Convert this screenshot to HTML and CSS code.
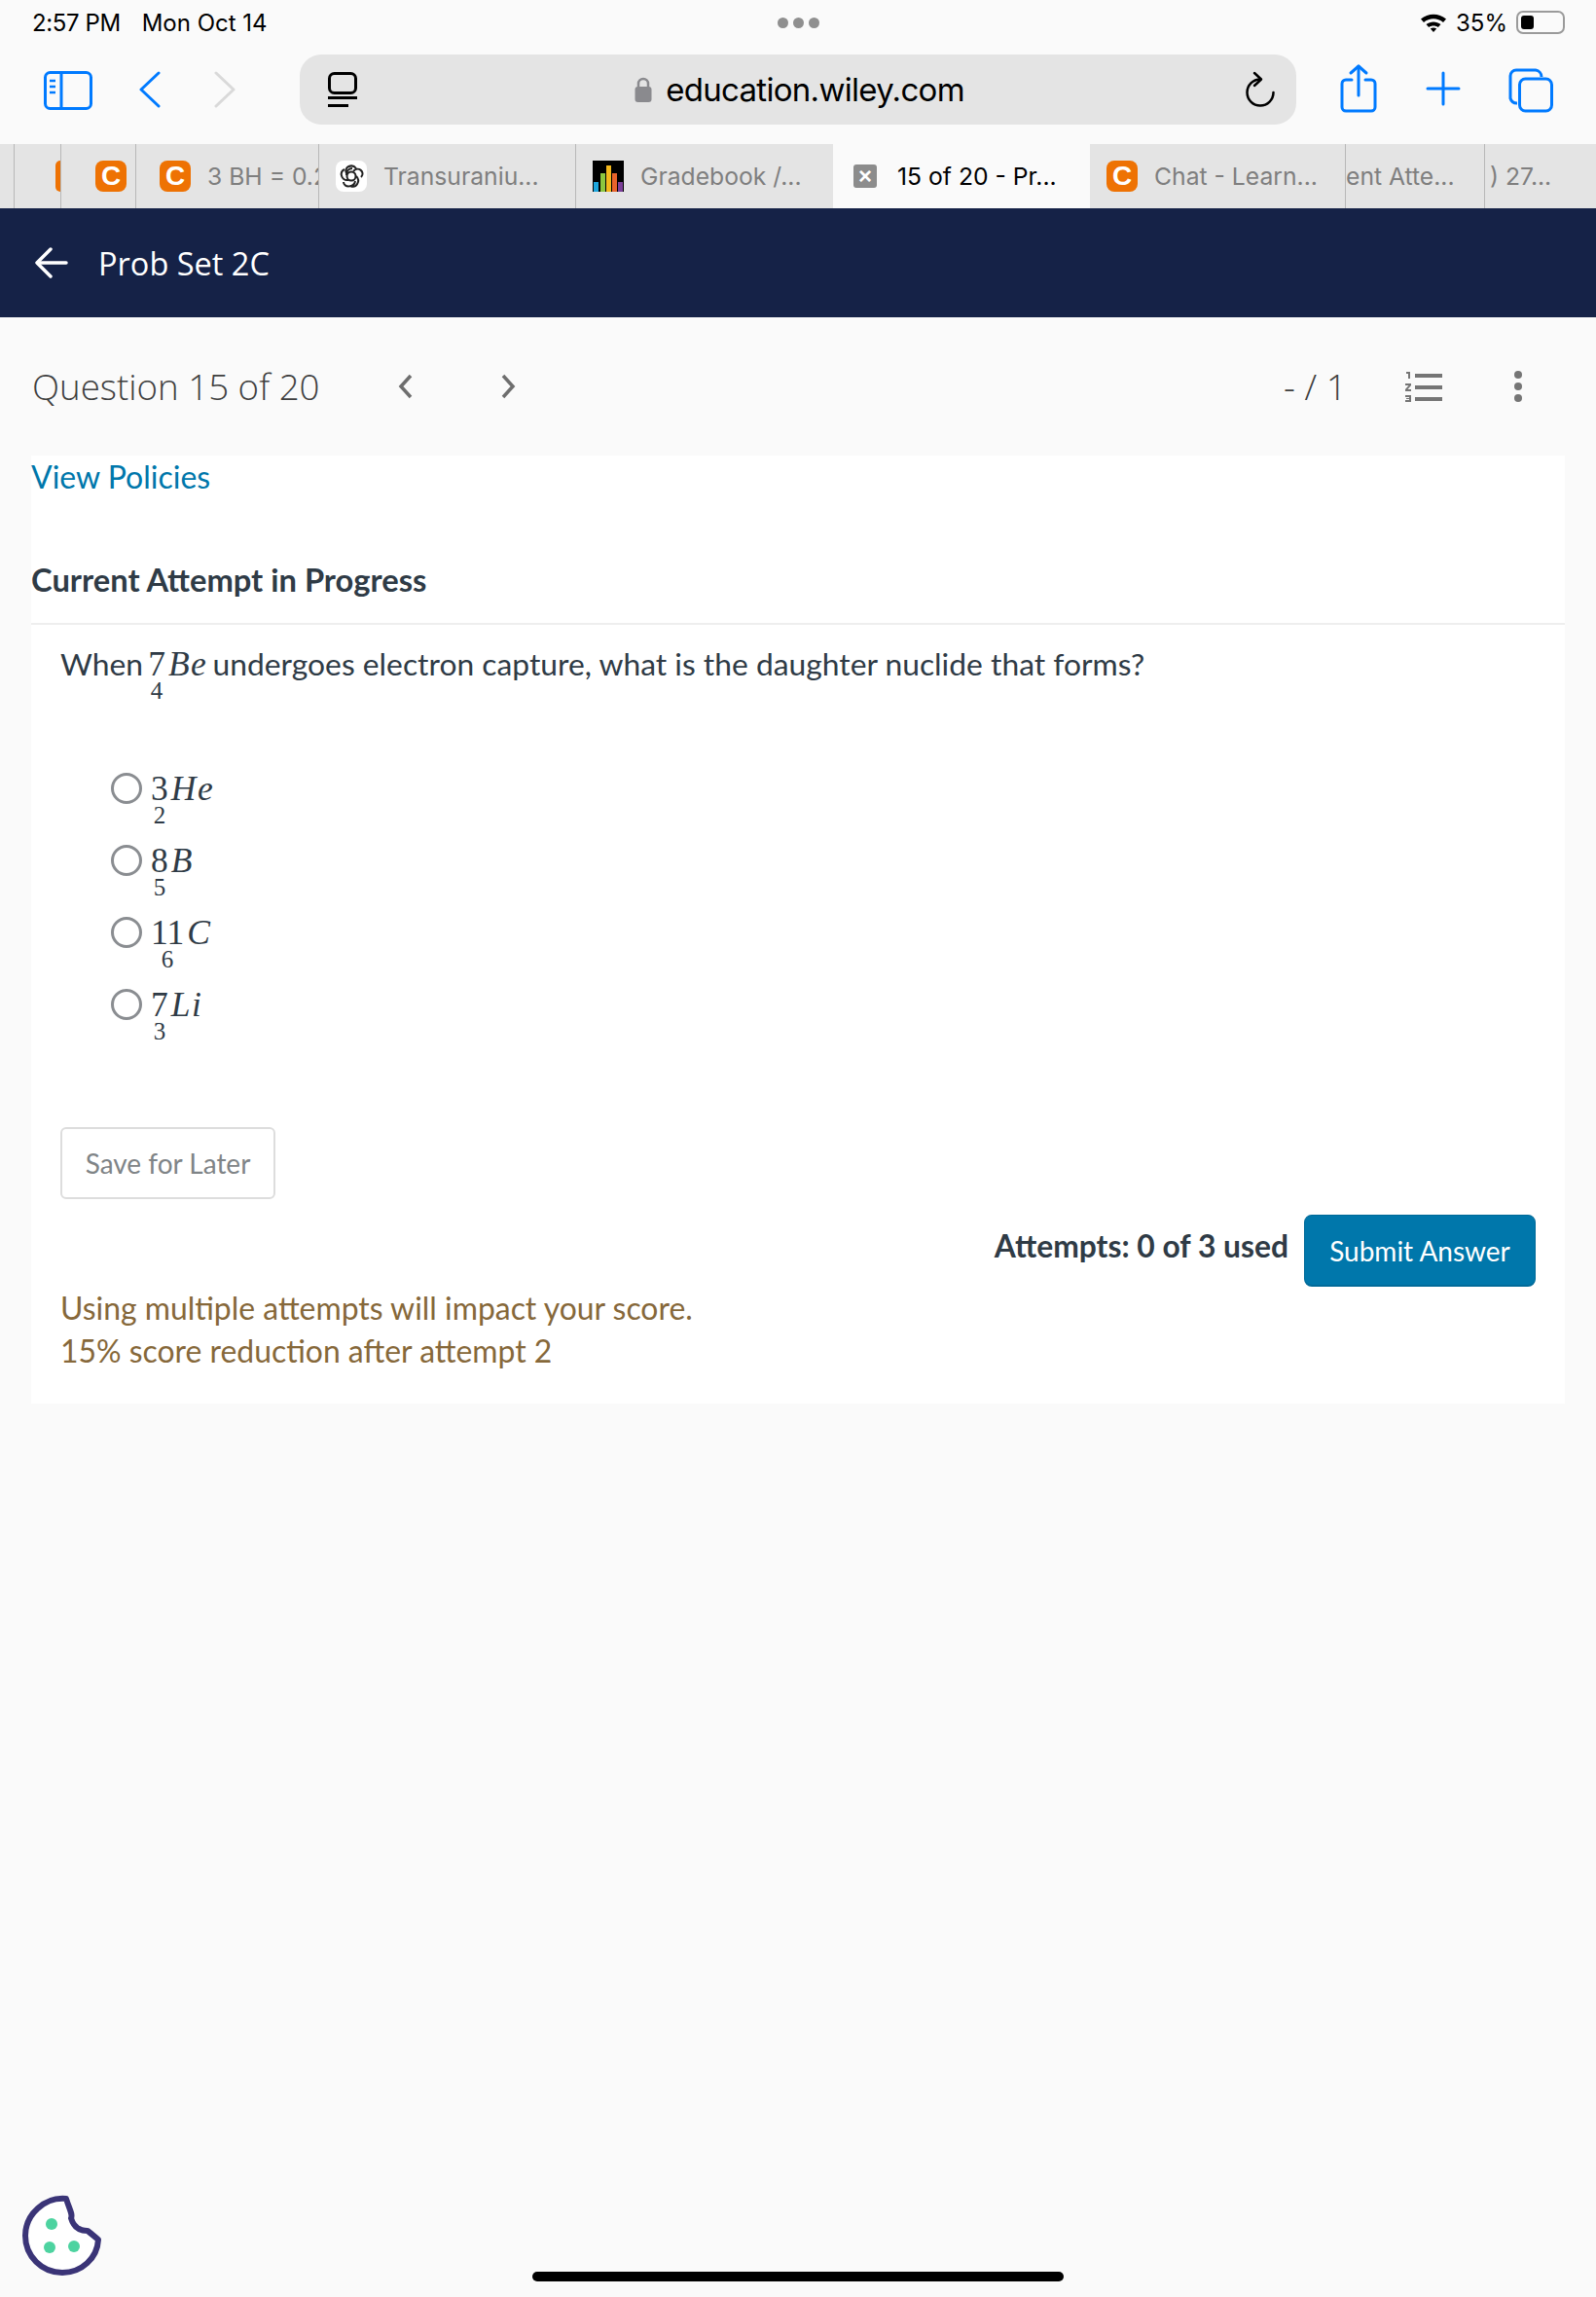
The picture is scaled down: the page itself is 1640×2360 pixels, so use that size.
FILE: index.html
```html
<!DOCTYPE html>
<html lang="en">
<head>
    <meta charset="UTF-8">
    <title>15 of 20 - Prob Set 2C</title>
    <link rel="stylesheet" href="styles.css">
</head>
<body>
    <div class="screen">
        <!-- status bar -->
        <div class="status">
            <div class="status-left"><span class="clock">2:57 PM</span><span>Mon Oct 14</span></div>
            <div class="status-dots"><i></i><i></i><i></i></div>
            <div class="status-right">
                <svg class="wifi" viewBox="0 0 28 22"><path d="M1 7.500C8.500 1 19.500 1 27 7.500L24 11C18 6 10 6 4 11Z M6.500 13C11 9.500 17 9.500 21.500 13L18.800 16C16 14 12 14 9.200 16Z M10.800 17.500C12.800 16 15.200 16 17.200 17.500L14 21Z" fill="#000"/></svg>
                <span>35%</span>
                <div class="battery"><div class="battery-fill"></div></div>
            </div>
        </div>

        <!-- safari toolbar -->
        <div class="toolbar">
            <svg class="ic-sidebar" viewBox="0 0 50 40" fill="none" stroke="#007aff" stroke-width="3"><rect x="1.500" y="1.500" width="47" height="37" rx="5"/><path d="M18 1.500V38.500"/><path d="M6 10H12M6 16H12M6 22H12" stroke-width="2.500"/></svg>
            <svg class="ic-back" viewBox="0 0 24 38" fill="none" stroke="#007aff" stroke-width="3" stroke-linecap="round" stroke-linejoin="round"><path d="M21 2L3 19L21 36"/></svg>
            <svg class="ic-forward" viewBox="0 0 24 38" fill="none" stroke="#d9d9d9" stroke-width="3" stroke-linecap="round" stroke-linejoin="round"><path d="M3 2L21 19L3 36"/></svg>
            <div class="address">
                <svg class="ic-reader" viewBox="0 0 32 36" fill="none" stroke="#000" stroke-width="3"><rect x="2.500" y="1.500" width="27" height="20" rx="5"/><path d="M1 26.500H31"/><path d="M1 34.500H22"/></svg>
                <div class="url">
                    <svg class="ic-lock" viewBox="0 0 18 28"><path d="M4 13V8a5 5 0 0 1 10 0v5" fill="none" stroke="#8a8a8e" stroke-width="2.500"/><rect x="0.500" y="11" width="17" height="16" rx="3" fill="#8a8a8e"/></svg>
                    <span>education.wiley.com</span>
                </div>
                <svg class="ic-reload" viewBox="0 0 32 38" fill="none" stroke="#000" stroke-width="2.500" stroke-linecap="round" stroke-linejoin="round"><path d="M16 8.500A13.500 13.500 0 1 0 29.500 22"/><path d="M10 2L17 8.500L10 15"/></svg>
            </div>
            <svg class="ic-share" viewBox="0 0 38 50" fill="none" stroke="#007aff" stroke-width="3" stroke-linecap="round" stroke-linejoin="round"><path d="M12 16H6a4 4 0 0 0-4 4V44a4 4 0 0 0 4 4H32a4 4 0 0 0 4-4V20a4 4 0 0 0-4-4H26"/><path d="M19 32V2"/><path d="M11 9L19 2L27 9"/></svg>
            <svg class="ic-plus" viewBox="0 0 36 36" stroke="#007aff" stroke-width="3" stroke-linecap="round"><path d="M18 2V34M2 18H34"/></svg>
            <svg class="ic-tabs" viewBox="0 0 46 46" fill="none" stroke="#007aff" stroke-width="3"><path d="M9 36A7 7 0 0 1 2 31V8A6 6 0 0 1 8 2H28A7 7 0 0 1 34 9"/><rect x="11.500" y="11" width="33" height="33" rx="6"/></svg>
        </div>

        <!-- tabs -->
        <div class="tabs">
            <div class="tab tab-a"></div>
            <div class="tab tab-b"><span class="fav fav-cut"></span></div>
            <div class="tab tab-c"><span class="fav fav-c">C</span></div>
            <div class="tab tab-d"><span class="fav">C</span><span class="tab-text">3 BH = 0.2</span></div>
            <div class="tab tab-e">
                <span class="fav fav-white"><svg viewBox="0 0 32 32" fill="none" stroke="#222" stroke-width="2"><circle cx="16" cy="16" r="4.500"/><path d="M11 13C8 6 17 3 21 8M18 11C23 5 31 12 26 17M21 16C26 21 21 29 15 26M20 21C19 28 8 28 8 22M13 20C6 21 3 12 9 9M11 15C11 10 14 8 17 8"/></svg></span>
                <span class="tab-text">Transuraniu...</span>
            </div>
            <div class="tab tab-f">
                <span class="fav fav-bars"><svg viewBox="0 0 32 32"><rect width="32" height="32" fill="#000"/><rect x="1" y="22" width="5" height="10" fill="#1ea5dc"/><rect x="8" y="13" width="5" height="19" fill="#8cc63f"/><rect x="14" y="5" width="5" height="27" fill="#f4b81c"/><rect x="20" y="13" width="5" height="19" fill="#e8632b"/><rect x="26" y="22" width="5" height="10" fill="#7b3f98"/></svg></span>
                <span class="tab-text">Gradebook /...</span>
            </div>
            <div class="tab tab-active">
                <span class="fav-close">&#215;</span>
                <span class="tab-text">15 of 20 - Pr...</span>
            </div>
            <div class="tab tab-h"><span class="fav">C</span><span class="tab-text">Chat - Learn...</span></div>
            <div class="tab tab-i"><span class="tab-text">ent Atte...</span></div>
            <div class="tab tab-j"><span class="tab-text">) 27...</span></div>
        </div>

        <!-- course bar -->
        <div class="course">
            <svg class="ic-arrow" viewBox="0 0 34 32" fill="none" stroke="#fff" stroke-width="3.500" stroke-linecap="round" stroke-linejoin="round"><path d="M32 16H3"/><path d="M16 2L2 16L16 30"/></svg>
            <span>Prob Set 2C</span>
        </div>

        <!-- question header -->
        <div class="qhead">
            <div class="qtitle">Question 15 of 20</div>
            <svg class="ic-prev" viewBox="0 0 16 26" fill="none" stroke="#6e6e6e" stroke-width="3.500"><path d="M13 2L3 13L13 24"/></svg>
            <svg class="ic-next" viewBox="0 0 16 26" fill="none" stroke="#6e6e6e" stroke-width="3.500"><path d="M3 2L13 13L3 24"/></svg>
            <div class="score">- / 1</div>
            <svg class="ic-list" viewBox="0 0 39 32" fill="#757575"><rect x="11" y="3" width="28" height="4"/><rect x="11" y="15" width="28" height="4"/><rect x="11" y="27" width="28" height="4"/><path d="M2 1H6V8H4V3H2Z M1 13H7V15L3.500 19H7V21H1V19L4.500 15H1Z M1 25H7V32H1V30H5V29H2V28H5V27H1Z"/></svg>
            <svg class="ic-more" viewBox="0 0 8 32" fill="#757575"><circle cx="4" cy="4" r="4"/><circle cx="4" cy="16" r="4"/><circle cx="4" cy="28" r="4"/></svg>
        </div>

        <!-- question card -->
        <div class="card">
            <a class="policies">View Policies</a>
            <h2 class="progress">Current Attempt in Progress</h2>
            <div class="body">
                <p class="prompt">When <span class="nuc"><span class="mass">7</span><i class="sym">Be</i><span class="atomic">4</span></span> undergoes electron capture, what is the daughter nuclide that forms?</p>
                <div class="choices">
                    <label class="choice"><span class="radio"></span><span class="nuc"><span class="mass">3</span><i class="sym">He</i><span class="atomic">2</span></span></label>
                    <label class="choice"><span class="radio"></span><span class="nuc"><span class="mass">8</span><i class="sym">B</i><span class="atomic">5</span></span></label>
                    <label class="choice"><span class="radio"></span><span class="nuc"><span class="mass">11</span><i class="sym">C</i><span class="atomic">6</span></span></label>
                    <label class="choice"><span class="radio"></span><span class="nuc"><span class="mass">7</span><i class="sym">Li</i><span class="atomic">3</span></span></label>
                </div>
                <div class="save">Save for Later</div>
                <div class="submit-row">
                    <span class="attempts">Attempts: 0 of 3 used</span>
                    <div class="submit">Submit Answer</div>
                </div>
                <div class="notice">Using multiple attempts will impact your score.<br>15% score reduction after attempt 2</div>
            </div>
        </div>

        <!-- cookie settings -->
        <svg class="cookie" viewBox="0 0 84 84"><path d="M46 4C24 2 4 20 4 42C4 63 21 80 42 80C62 80 78 65 79 46C74 42 72 40 68 37C58 37 53 31 51 24C53 20 49 14 46 4Z" fill="#fff" stroke="#3a3477" stroke-width="6" stroke-linejoin="round"/><circle cx="31" cy="30" r="6" fill="#4dd3a0"/><circle cx="29" cy="54" r="6" fill="#4dd3a0"/><circle cx="54" cy="53" r="6" fill="#4dd3a0"/></svg>
        <div class="home"></div>
    </div>
</body>
</html>
```

FILE: styles.css
```css
*{
    padding: 0;
    margin: 0;
    box-sizing: border-box;
}
html, body{
    width: 100%;
    height: 100%;
}
body{
    background: #fafafa;
    font-family: "Lato", sans-serif;
    color: #2f3b46;
}
.screen{
    width: 1640px;
    height: 2360px;
    position: relative;
    overflow: hidden;
}

/* status bar */
.status{
    height: 50px;
    padding: 0 32px 4px 33px;
    display: grid;
    grid-template-columns: 1fr auto 1fr;
    align-items: center;
    font-family: "Inter", sans-serif;
    font-size: 24px;
    color: #000;
}
.status-left{
    display: flex;
    gap: 22px;
}
.clock{
    letter-spacing: -0.4px;
}
.status-dots{
    display: flex;
    gap: 5px;
}
.status-dots i{
    width: 11px;
    height: 11px;
    border-radius: 50%;
    background: #8f8f8f;
}
.status-right{
    display: flex;
    justify-content: flex-end;
    align-items: center;
    gap: 9px;
}
.wifi{
    width: 28px;
    height: 22px;
}
.battery{
    width: 50px;
    height: 24px;
    border: 2px solid #9a9a9a;
    border-radius: 7px;
    padding: 3px;
}
.battery-fill{
    width: 13px;
    height: 100%;
    background: #000;
    border-radius: 3px;
}

/* toolbar */
.toolbar{
    height: 98px;
    padding: 6px 0 0 45px;
    display: flex;
    align-items: flex-start;
}
.toolbar svg{
    flex: none;
}
.ic-sidebar{
    width: 50px;
    height: 40px;
    margin: 17px 0 0 0;
}
.ic-back{
    width: 24px;
    height: 38px;
    margin: 17px 0 0 47px;
}
.ic-forward{
    width: 24px;
    height: 38px;
    margin: 17px 0 0 53px;
}
.address{
    width: 1024px;
    height: 72px;
    margin-left: 65px;
    background: #e4e4e4;
    border-radius: 22px;
    display: flex;
    align-items: center;
    padding: 0 21px 0 28px;
}
.ic-reader{
    width: 32px;
    height: 36px;
}
.url{
    flex: 1;
    display: flex;
    justify-content: center;
    align-items: center;
    gap: 14px;
    font-family: "Inter", sans-serif;
    font-size: 33px;
    letter-spacing: -0.7px;
    color: #000;
    padding-right: 4px;
}
.ic-lock{
    width: 18px;
    height: 28px;
}
.ic-reload{
    width: 32px;
    height: 38px;
}
.ic-share{
    width: 38px;
    height: 50px;
    margin: 10px 0 0 45px;
}
.ic-plus{
    width: 36px;
    height: 36px;
    margin: 17px 0 0 50px;
}
.ic-tabs{
    width: 46px;
    height: 46px;
    margin: 14px 0 0 49px;
}

/* tabs */
.tabs{
    height: 66px;
    background: #e4e4e4;
    display: flex;
    font-family: "Inter", sans-serif;
    font-size: 24.700px;
    color: #7f7f7f;
}
.tab{
    flex: none;
    height: 100%;
    display: flex;
    align-items: center;
    border-right: 1px solid #b8b8b8;
    overflow: hidden;
    white-space: nowrap;
}
.tab-a{ width: 15px; }
.tab-b{ width: 48px; justify-content: flex-end; }
.tab-c{ width: 77px; padding-left: 35px; }
.tab-d{ width: 188px; padding-left: 24px; }
.tab-e{ width: 264px; padding-left: 17px; }
.tab-f{ width: 264px; padding-left: 17px; border-right: 0; }
.tab-active{
    width: 264px;
    padding-left: 21px;
    background: #fafafa;
    color: #000;
    border-right: 0;
}
.tab-h{ width: 263px; padding-left: 17px; }
.tab-i{ width: 143px; }
.tab-j{ flex: 1; padding-left: 5px; border-right: 0; }
.tab-text{
    margin-left: 17px;
}
.tab-i .tab-text, .tab-j .tab-text{
    margin-left: 0;
}
.tab-active .tab-text{
    margin-left: 21px;
}
.fav{
    flex: none;
    width: 32px;
    height: 32px;
    border-radius: 8px;
    background: #ee7203;
    color: #fff;
    font-family: "Liberation Sans", sans-serif;
    font-weight: 700;
    font-size: 28px;
    text-align: center;
    line-height: 32px;
}
.fav-cut{
    width: 5px;
    border-radius: 8px 0 0 8px;
}
.fav-white{
    background: #fff;
}
.fav-bars{
    border-radius: 0;
    background: #000;
}
.fav svg{
    display: block;
    width: 32px;
    height: 32px;
}
.fav-close{
    flex: none;
    width: 24px;
    height: 24px;
    border-radius: 3px;
    background: #8c8c8c;
    color: #fff;
    font-family: "Liberation Sans", sans-serif;
    font-size: 24px;
    font-weight: 700;
    text-align: center;
    line-height: 24px;
}

/* course bar */
.course{
    height: 112px;
    background: #152247;
    color: #fff;
    display: flex;
    align-items: center;
    padding-left: 36px;
    gap: 31px;
    font-family: "Open Sans", sans-serif;
    font-size: 32.500px;
}
.ic-arrow{
    width: 34px;
    height: 32px;
}

/* question header */
.qhead{
    height: 142px;
    padding: 0 0 1px 33px;
    display: flex;
    align-items: center;
    font-family: "Open Sans", sans-serif;
    color: #3f3f3f;
}
.qtitle{
    width: 376px;
    font-size: 36.700px;
    font-weight: 300;
}
.ic-prev, .ic-next{
    width: 16px;
    height: 26px;
}
.ic-next{
    margin-left: 89px;
}
.score{
    margin-left: 789px;
    width: 124px;
    font-size: 37px;
    font-weight: 300;
}
.ic-list{
    width: 39px;
    height: 32px;
}
.ic-more{
    width: 8px;
    height: 32px;
    margin-left: 74px;
}

/* card */
.card{
    margin: 0 32px;
    height: 974px;
    background: #fff;
}
.policies{
    display: block;
    height: 49px;
    line-height: 43px;
    font-size: 32px;
    color: #0077ab;
}
.progress{
    margin-top: 56px;
    height: 69px;
    line-height: 46px;
    font-size: 32.700px;
    font-weight: 700;
    border-bottom: 2px solid #eeeeee;
    color: #2f3b46;
}
.body{
    padding: 0 30px;
}
.prompt{
    margin-top: 17px;
    font-size: 31.800px;
    line-height: 46px;
    height: 100px;
}
.prompt .nuc{
    margin: 0 -3px 0 -3px;
}
.nuc{
    display: inline-grid;
    grid-template-columns: auto auto;
    column-gap: 3px;
    vertical-align: baseline;
    font-family: "Liberation Serif", serif;
    font-size: 35.500px;
    line-height: 40px;
    height: 40px;
}
.sym{
    font-weight: 400;
    letter-spacing: 1.500px;
}
.atomic{
    grid-column: 1;
    justify-self: center;
    font-size: 25px;
    line-height: 22px;
    margin-top: -3px;
}
.choices{
    margin-top: 31px;
    padding-left: 52px;
    display: flex;
    flex-direction: column;
    gap: 34px;
}
.choice{
    height: 40px;
    display: flex;
    align-items: center;
    gap: 9px;
}
.radio{
    flex: none;
    width: 32px;
    height: 32px;
    border: 3px solid #8a8d91;
    border-radius: 50%;
}
.save{
    margin-top: 106px;
    width: 221px;
    height: 74px;
    border: 2px solid #dddddd;
    border-radius: 6px;
    text-align: center;
    line-height: 70px;
    font-size: 28px;
    color: #7f8487;
}
.submit-row{
    margin-top: 16px;
    display: flex;
    justify-content: flex-end;
    align-items: flex-start;
    gap: 16px;
}
.attempts{
    font-size: 31.800px;
    font-weight: 700;
    line-height: 64px;
}
.submit{
    width: 238px;
    height: 74px;
    background: #0077ab;
    border: 1px solid #006a99;
    border-bottom-width: 2px;
    border-radius: 8px;
    color: #fff;
    font-size: 28px;
    text-align: center;
    line-height: 72px;
}
.notice{
    margin-top: 0;
    font-size: 31.900px;
    line-height: 44px;
    color: #86683a;
}

.cookie{
    position: absolute;
    left: 22px;
    bottom: 21px;
    width: 84px;
    height: 84px;
}
.home{
    position: absolute;
    left: 547px;
    bottom: 16px;
    width: 546px;
    height: 10px;
    border-radius: 5px;
    background: #000;
}
```
